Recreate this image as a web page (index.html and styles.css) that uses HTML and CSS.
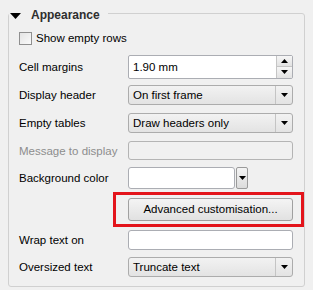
FILE: index.html
```html
<!DOCTYPE html>
<html lang="en">
<head>
    <meta charset="UTF-8">
    <title>Appearance</title>
    <link rel="stylesheet" href="styles.css">
</head>
<body>
    <fieldset class="group">
        <legend class="group-title">
            <svg class="caret" width="11" height="6" viewBox="0 0 11 6"><path d="M0 0H11L5.5 6Z"/></svg>
            Appearance
        </legend>
        <div class="rows">
            <!-- checkbox spans both columns -->
            <label class="check-row"><span class="checkbox"></span>Show empty rows</label>

            <span class="label">Cell margins</span>
            <div class="spin">
                <span class="value">1.90 mm</span>
                <span class="spin-buttons">
                    <span class="spin-btn"><svg width="7" height="4" viewBox="0 0 7 4"><path d="M0 4H7L3.5 0Z"/></svg></span>
                    <span class="spin-btn"><svg width="7" height="4" viewBox="0 0 7 4"><path d="M0 0H7L3.5 4Z"/></svg></span>
                </span>
            </div>

            <span class="label">Display header</span>
            <div class="combo">
                <span class="value">On first frame</span>
                <span class="combo-arrow"><svg width="7" height="4" viewBox="0 0 7 4"><path d="M0 0H7L3.5 4Z"/></svg></span>
            </div>

            <span class="label">Empty tables</span>
            <div class="combo">
                <span class="value">Draw headers only</span>
                <span class="combo-arrow"><svg width="7" height="4" viewBox="0 0 7 4"><path d="M0 0H7L3.5 4Z"/></svg></span>
            </div>

            <span class="label disabled">Message to display</span>
            <div class="text-input is-disabled"></div>

            <span class="label">Background color</span>
            <div class="color-pick">
                <span class="color-box"></span>
                <span class="color-arrow"><svg width="7" height="4" viewBox="0 0 7 4"><path d="M0 0H7L3.5 4Z"/></svg></span>
            </div>

            <span></span>
            <div class="highlight">
                <button class="push-btn" type="button">Advanced customisation...</button>
            </div>

            <span class="label">Wrap text on</span>
            <div class="text-input"></div>

            <span class="label">Oversized text</span>
            <div class="combo">
                <span class="value">Truncate text</span>
                <span class="combo-arrow"><svg width="7" height="4" viewBox="0 0 7 4"><path d="M0 0H7L3.5 4Z"/></svg></span>
            </div>
        </div>
    </fieldset>
</body>
</html>
```

FILE: styles.css
```css
body {
    margin: 0;
    background: #f0f0f0;
    font-family: "Liberation Sans", Arial, sans-serif;
    font-size: 11.5px;
    color: #000;
}
.group {
    box-sizing: border-box;
    width: 297px;
    margin: 5px 0 0 8px;
    padding: 0;
    border: 1px solid #d0d0d0;
    border-radius: 3px;
    min-width: 0;
}
.group-title {
    display: flex;
    align-items: center;
    gap: 10px;
    padding: 3px 8px 0 1px;
    line-height: 14px;
    font-size: 12px;
    font-weight: bold;
    color: #2e2e2e;
}
.caret {
    fill: #1e1e1e;
    margin-top: 1px;
}
.rows {
    display: grid;
    grid-template-columns: 109px 165px;
    grid-template-rows: 28px 29px 28px 28px 27px 28px 34px 28px 26px;
    align-items: center;
    padding: 2px 10px 6px 10px;
}
.check-row {
    grid-column: 1 / 3;
    display: flex;
    align-items: center;
    gap: 4px;
}
.checkbox {
    box-sizing: border-box;
    width: 13px;
    height: 13px;
    border: 1px solid #8f8f8f;
    background: linear-gradient(135deg, #e4e4e4, #fafafa);
}
.label.disabled {
    color: #8d8d8d;
}
.value {
    padding-left: 4px;
    white-space: nowrap;
}
.spin {
    box-sizing: border-box;
    height: 24px;
    display: flex;
    align-items: center;
    justify-content: space-between;
    background: #fff;
    border: 1px solid #abadb3;
    border-radius: 2px;
}
.spin-buttons {
    display: flex;
    flex-direction: column;
    align-self: stretch;
    width: 16px;
}
.spin-btn {
    flex: 1;
    display: flex;
    align-items: center;
    justify-content: center;
    border-left: 1px solid #c5c5c5;
    background: linear-gradient(#f6f6f6, #e2e2e2);
}
.spin-btn + .spin-btn {
    border-top: 1px solid #c5c5c5;
}
.combo {
    box-sizing: border-box;
    height: 20px;
    display: flex;
    align-items: center;
    justify-content: space-between;
    border: 1px solid #acacac;
    border-radius: 3px;
    background: linear-gradient(#f2f2f2, #e3e3e3);
}
.combo-arrow {
    align-self: stretch;
    width: 16px;
    display: flex;
    align-items: center;
    justify-content: center;
    border-left: 1px solid #c4c4c4;
}
svg path {
    fill: #000;
}
.text-input {
    box-sizing: border-box;
    height: 20px;
    background: #fff;
    border: 1px solid #abadb3;
    border-radius: 3px;
}
.text-input.is-disabled {
    height: 19px;
    background: #f0f0f0;
    border-color: #b4b4b4;
}
.color-pick {
    display: flex;
    gap: 1px;
    height: 22px;
}
.color-box {
    box-sizing: border-box;
    width: 107px;
    background: #fff;
    border: 1px solid #abadb3;
    border-radius: 3px;
}
.color-arrow {
    box-sizing: border-box;
    width: 12px;
    display: flex;
    align-items: center;
    justify-content: center;
    border: 1px solid #9a9a9a;
    border-radius: 2px;
    background: linear-gradient(#f4f4f4, #dcdcdc);
}
.highlight {
    position: relative;
}
/* red annotation frame drawn over the button */
.highlight::after {
    content: "";
    position: absolute;
    top: -6px;
    bottom: -6px;
    left: -15px;
    right: -11px;
    border: 3px solid #e3141b;
}
.push-btn {
    display: block;
    box-sizing: border-box;
    width: 100%;
    height: 23px;
    padding: 0;
    font: inherit;
    color: #000;
    border: 1px solid #a0a0a0;
    border-radius: 3px;
    background: linear-gradient(#f4f4f4, #e1e1e1);
}
```
